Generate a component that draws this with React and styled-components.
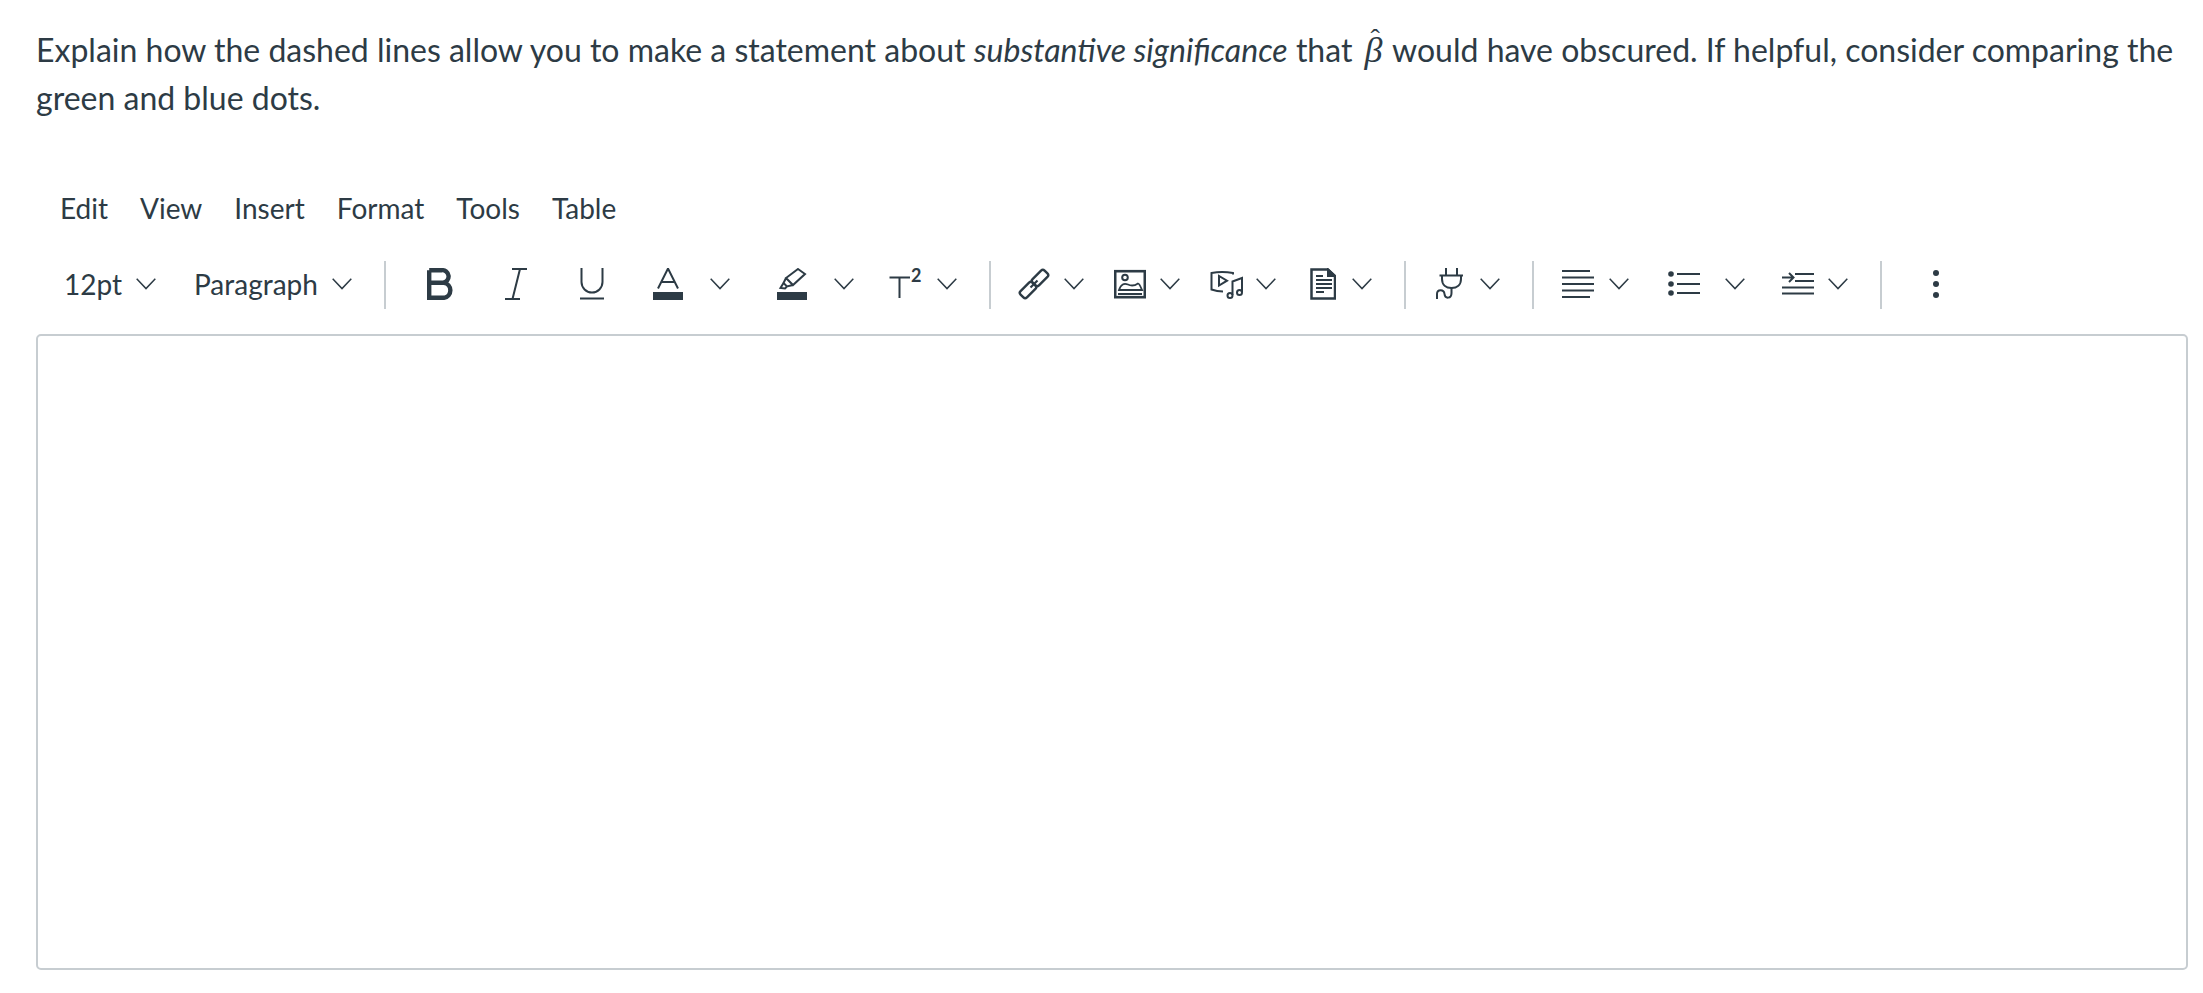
import React from 'react'
import styled, { createGlobalStyle } from 'styled-components'

const GlobalStyle = createGlobalStyle`
  html, body {
    margin: 0;
    background: #fff;
  }
  body {
    font-family: Lato, "Open Sans", sans-serif;
    color: #2d3b45;
  }
`

const Page = styled.main`
  box-sizing: border-box;
  width: 2203px;
  height: 993px;
  overflow: hidden;
  padding: 26px 15px 0 36px;
`

const Prompt = styled.p`
  margin: 0;
  font-size: 32px;
  line-height: 48px;
`

const Beta = styled.span`
  position: relative;
  display: inline-block;
  font-family: "Liberation Serif", serif;
  font-style: italic;
  font-size: 36px;
  line-height: 1;
  margin: 0 2px 0 4px;
`

const Hat = styled.span`
  position: absolute;
  left: 6px;
  top: -7px;
  font-size: 28px;
  font-style: normal;
`

const MenuBar = styled.nav`
  display: flex;
  gap: 32px;
  height: 48px;
  align-items: center;
  margin-top: 62px;
  padding-left: 24px;
`

const MenuItem = styled.span`
  font-size: 28px;
`

const Toolbar = styled.div`
  display: flex;
  align-items: center;
  height: 48px;
  margin-top: 29px;
  padding-left: 28px;
`

const SelectButton = styled.button`
  display: flex;
  flex: none;
  align-items: center;
  gap: 14px;
  width: ${p => p.$width}px;
  padding: 0 0 2px;
  border: 0;
  background: none;
  color: inherit;
  font: inherit;
  font-size: 28px;
`

const ToolButton = styled.button`
  display: flex;
  flex: none;
  align-items: center;
  gap: ${p => p.$gap || 0}px;
  margin-left: ${p => p.$left}px;
  padding: 0 0 2px;
  border: 0;
  background: none;
  color: inherit;
`

const Divider = styled.span`
  flex: none;
  width: 2px;
  height: 48px;
  margin-left: ${p => p.$left || 0}px;
  background: #c7cdd1;
`

const Editor = styled.div`
  box-sizing: border-box;
  height: 636px;
  margin-top: 25px;
  border: 2px solid #c7cdd1;
  border-radius: 5px;
`

const Icon = ({ w, children }) => (
  <svg
    width={w}
    height="32"
    viewBox={`0 0 ${w} 32`}
    fill="none"
    stroke="#2d3b45"
    strokeWidth="2"
    style={{ display: 'block' }}
  >
    {children}
  </svg>
)

const Chevron = () => (
  <svg width="20" height="12" viewBox="0 0 20 12" fill="none" stroke="#2d3b45" strokeWidth="1.5" style={{ display: 'block' }}>
    <path d="M0.7 0.8 10 10.6 19.3 0.8" />
  </svg>
)

const BoldIcon = () => (
  <Icon w={26}>
    <path strokeWidth="4.4" d="M2.2 2.2V29.8H17A7.6 7.6 0 0 0 17 14.8H2.2M16 14.8A6.3 6.3 0 0 0 14.5 2.2H2.2" />
  </Icon>
)

const ItalicIcon = () => (
  <Icon w={22}>
    <path d="M7 1H22M0 31H15M15 1 7.5 31" />
  </Icon>
)

const UnderlineIcon = () => (
  <Icon w={26}>
    <path d="M2.5 0V14A10.5 10.5 0 0 0 23.5 14V0M1 30.5H25" />
  </Icon>
)

const TextColorIcon = () => (
  <Icon w={30}>
    <path d="M5 20.5 15 0.5 25 20.5M8 14H22" />
    <rect x="0" y="24" width="30" height="8" fill="#2d3b45" stroke="none" />
  </Icon>
)

const HighlightIcon = () => (
  <Icon w={30}>
    <path d="M21 1 28 6 16 17 9 10ZM9 10 6.5 15 10 18.5 16 17M6.5 15 3.5 20 8 20.5 10 18.5" />
    <rect x="0" y="24" width="30" height="8" fill="#2d3b45" stroke="none" />
  </Icon>
)

const SuperscriptIcon = () => (
  <Icon w={33}>
    <path d="M0.5 9.5H21M10.5 9.5V30" />
    <text x="22" y="14" fontFamily="Lato, sans-serif" fontWeight="700" fontSize="18" fill="#2d3b45" stroke="none">2</text>
  </Icon>
)

const LinkIcon = () => (
  <Icon w={32}>
    <rect x="13.5" y="5.5" width="17" height="9" rx="2.5" strokeWidth="2.4" transform="rotate(-45 22 10)" />
    <rect x="1.5" y="17.5" width="17" height="9" rx="2.5" strokeWidth="2.4" transform="rotate(-45 10 22)" />
    <path strokeWidth="2.2" d="M12.5 19.5 19.5 12.5" />
  </Icon>
)

const ImageIcon = () => (
  <Icon w={32}>
    <rect x="1.2" y="3.2" width="29.6" height="26" strokeWidth="2.6" />
    <circle cx="11" cy="9.5" r="2.8" />
    <path strokeWidth="1.8" d="M5 22C7 16 10 15 14 16.5 18 18.5 21 17.5 24 15.5 26 16 27 20 28 22ZM4 26H28" />
  </Icon>
)

const MediaIcon = () => (
  <Icon w={33}>
    <path d="M23 6.5V5Q12 3 1.5 5V21.5Q7 23.5 13 23.5" />
    <path d="M9 8V17.5L17 12.7Z" />
    <path d="M22.5 27V13.5L32 10V24" />
    <circle cx="20" cy="27.5" r="2.5" />
    <circle cx="29.5" cy="24.5" r="2.5" />
  </Icon>
)

const DocIcon = () => (
  <Icon w={26}>
    <path strokeWidth="2.5" d="M1.5 1.5H18L25 8V30.5H1.5Z" />
    <path d="M18 1.5V8H25Z" fill="#2d3b45" />
    <path d="M6 8H13M6 12H22M6 16H22M6 20H22M6 24H14" />
  </Icon>
)

const PlugIcon = () => (
  <Icon w={27}>
    <path d="M10 0V7M21 0V7M3.5 7.5H27M6 8V11C6 17 10 20 15.5 20S25 17 25 11V8" />
    <path d="M15.5 20V25C15.5 31 9 31 8.5 26 8 21 1 21 1 26V31" />
  </Icon>
)

const AlignIcon = () => (
  <Icon w={32}>
    <path d="M0 3H28M0 9.5H32M0 16H32M0 22.5H32M0 29H28" />
  </Icon>
)

const ListIcon = () => (
  <Icon w={32}>
    <circle cx="3" cy="6" r="2.8" fill="#2d3b45" stroke="none" />
    <circle cx="3" cy="16" r="2.8" fill="#2d3b45" stroke="none" />
    <circle cx="3" cy="25" r="2.8" fill="#2d3b45" stroke="none" />
    <path d="M9 6H32M9 16H32M9 25H32" />
  </Icon>
)

const IndentIcon = () => (
  <Icon w={32}>
    <path d="M13 6H32M13 13H32M0 19.5H32M0 25.5H32" />
    <path d="M0 9.5H11M7 5 11.5 9.5 7 14" />
  </Icon>
)

const MoreIcon = () => (
  <Icon w={6}>
    <circle cx="3" cy="5" r="3" fill="#2d3b45" stroke="none" />
    <circle cx="3" cy="16" r="3" fill="#2d3b45" stroke="none" />
    <circle cx="3" cy="27" r="3" fill="#2d3b45" stroke="none" />
  </Icon>
)

const menus = ['Edit', 'View', 'Insert', 'Format', 'Tools', 'Table']

// left = space before the button, gap = space between icon and chevron
const groups = [
  {
    left: 41,
    items: [
      { icon: <BoldIcon /> },
      { icon: <ItalicIcon />, left: 52 },
      { icon: <UnderlineIcon />, left: 52 },
      { icon: <TextColorIcon />, left: 48, gap: 27, menu: true },
      { icon: <HighlightIcon />, left: 47, gap: 27, menu: true },
      { icon: <SuperscriptIcon />, left: 35, gap: 15, menu: true },
    ],
  },
  {
    left: 27,
    items: [
      { icon: <LinkIcon />, gap: 14, menu: true },
      { icon: <ImageIcon />, left: 30, gap: 14, menu: true },
      { icon: <MediaIcon />, left: 30, gap: 13, menu: true },
      { icon: <DocIcon />, left: 34, gap: 16, menu: true },
    ],
  },
  {
    left: 30,
    items: [{ icon: <PlugIcon />, gap: 17, menu: true }],
  },
  {
    left: 28,
    items: [
      { icon: <AlignIcon />, gap: 15, menu: true },
      { icon: <ListIcon />, left: 39, gap: 25, menu: true },
      { icon: <IndentIcon />, left: 37, gap: 14, menu: true },
    ],
  },
  {
    left: 51,
    items: [{ icon: <MoreIcon /> }],
  },
]

export default function App() {
  return (
    <Page>
      <GlobalStyle />
      <Prompt>
        Explain how the dashed lines allow you to make a statement about <em>substantive significance</em> that{' '}
        <Beta>β<Hat>ˆ</Hat></Beta> would have obscured. If helpful, consider comparing the green and blue dots.
      </Prompt>

      <MenuBar>
        {menus.map(m => <MenuItem key={m}>{m}</MenuItem>)}
      </MenuBar>

      <Toolbar>
        <SelectButton $width={130}>12pt <Chevron /></SelectButton>
        <SelectButton $width={190}>Paragraph <Chevron /></SelectButton>
        {groups.map((group, g) => (
          <React.Fragment key={g}>
            <Divider $left={g === 0 ? 0 : 32} />
            {group.items.map((item, i) => (
              <ToolButton key={i} $left={i === 0 ? group.left : item.left} $gap={item.gap}>
                {item.icon}
                {item.menu && <Chevron />}
              </ToolButton>
            ))}
          </React.Fragment>
        ))}
      </Toolbar>

      <Editor />
    </Page>
  )
}
